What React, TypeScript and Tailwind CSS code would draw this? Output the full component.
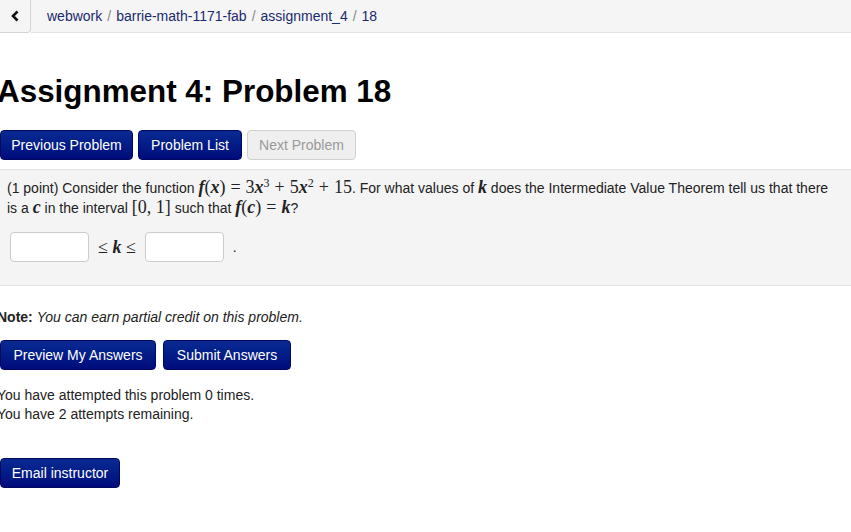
import React from "react";

const font = { fontFamily: '"Liberation Sans", Arial, sans-serif' };
const mathCls = "font-['Liberation_Serif',serif] text-[18px]";

const NavyButton = ({ children, className = "" }: { children: React.ReactNode; className?: string }) => (
  <button
    type="button"
    className={
      "h-[30px] whitespace-nowrap rounded-[4px] border border-[#00085e] bg-gradient-to-b from-[#0a2a92] to-[#000a7c] text-[14px] text-white " +
      className
    }
  >
    {children}
  </button>
);

const M = ({ children }: { children: React.ReactNode }) => (
  <span className={mathCls}>{children}</span>
);
const I = ({ children }: { children: React.ReactNode }) => (
  <i className="font-['Liberation_Serif',serif] font-semibold">{children}</i>
);
const Op = ({ children }: { children: React.ReactNode }) => (
  <span className="inline-block px-[5px]">{children}</span>
);

const App = () => {
  return (
    <div style={font} className="min-h-[532px] w-[851px] overflow-hidden bg-white text-[14px] text-[#222]">
      <div className="flex h-[33px]">
        <button className="flex w-[31px] items-center justify-center rounded-br-[4px] border-r border-b border-[#d4d4d4] bg-[#f5f5f5]">
          <svg width="10" height="12" viewBox="0 0 10 12">
            <path d="M7.5 1.5 L3 6 L7.5 10.5" fill="none" stroke="#111" strokeWidth="2.6" />
          </svg>
        </button>
        <div className="flex flex-1 items-center border-b border-[#e3e3e3] bg-[#f5f5f5] pl-[16px] text-[14px] text-[#1a2a6c]">
          <span>webwork</span>
          <span className="px-[5px] text-[#888]">/</span>
          <span>barrie-math-1171-fab</span>
          <span className="px-[5px] text-[#888]">/</span>
          <span>assignment_4</span>
          <span className="px-[5px] text-[#888]">/</span>
          <span>18</span>
        </div>
      </div>

      <h1 className="-ml-[3px] mt-[39px] text-[31.4px] font-bold leading-[40px] text-black">
        Assignment 4: Problem 18
      </h1>

      <div className="mt-[18px] flex gap-[5px]">
        <NavyButton className="w-[133px]">Previous Problem</NavyButton>
        <NavyButton className="w-[104px]">Problem List</NavyButton>
        <button
          type="button"
          className="h-[30px] w-[109px] rounded-[4px] border border-[#d0d0d0] bg-[#efefef] text-[14px] text-[#999]"
        >
          Next Problem
        </button>
      </div>

      <div className="mt-[9px] h-[117px] border-t border-b border-[#e3e3e3] bg-[#f4f4f4] px-[7px] pt-[8px]">
        <p className="leading-[19px] text-[#222]">
          (1 point) Consider the function{" "}
          <M>
            <I>f</I>(<I>x</I>)<Op>=</Op>3<I>x</I>
            <sup className="text-[12px]">3</sup>
            <Op>+</Op>5<I>x</I>
            <sup className="text-[12px]">2</sup>
            <Op>+</Op>15
          </M>
          . For what values of <M><I>k</I></M> does the Intermediate Value Theorem tell us that there
          <br />
          is a <M><I>c</I></M> in the interval <M>[0, 1]</M> such that{" "}
          <M>
            <I>f</I>(<I>c</I>)<Op>=</Op><I>k</I>
          </M>
          ?
        </p>
        <div className="mt-[14px] flex items-center">
          <input className="ml-[3px] h-[30px] w-[79px] rounded-[4px] border border-[#ccc] bg-white" />
          <span className={mathCls + " mx-[9px]"}>
            ≤ <I>k</I> ≤
          </span>
          <input className="h-[30px] w-[79px] rounded-[4px] border border-[#ccc] bg-white" />
          <span className="ml-[9px]">.</span>
        </div>
      </div>

      <p className="-ml-[3px] mt-[21px] text-[14px]">
        <b>Note:</b> <i>You can earn partial credit on this problem.</i>
      </p>

      <div className="mt-[12px] flex gap-[7px]">
        <NavyButton className="w-[156px]">Preview My Answers</NavyButton>
        <NavyButton className="w-[128px]">Submit Answers</NavyButton>
      </div>

      <div className="-ml-[3px] mt-[16px] leading-[19px]">
        <p>You have attempted this problem 0 times.</p>
        <p>You have 2 attempts remaining.</p>
      </div>

      <div className="mt-[34px]">
        <NavyButton className="w-[120px]">Email instructor</NavyButton>
      </div>
    </div>
  );
};

export default App;
